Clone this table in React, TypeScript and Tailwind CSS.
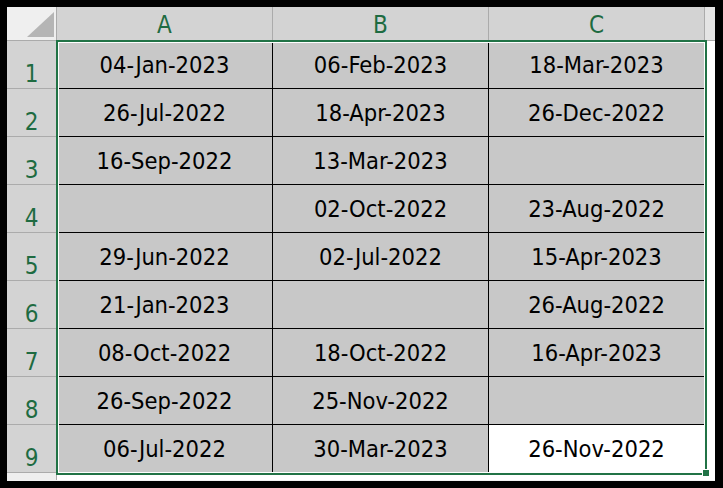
import React from "react";

const rows: string[][] = [
  ["04-Jan-2023", "06-Feb-2023", "18-Mar-2023"],
  ["26-Jul-2022", "18-Apr-2023", "26-Dec-2022"],
  ["16-Sep-2022", "13-Mar-2023", ""],
  ["", "02-Oct-2022", "23-Aug-2022"],
  ["29-Jun-2022", "02-Jul-2022", "15-Apr-2023"],
  ["21-Jan-2023", "", "26-Aug-2022"],
  ["08-Oct-2022", "18-Oct-2022", "16-Apr-2023"],
  ["26-Sep-2022", "25-Nov-2022", ""],
  ["06-Jul-2022", "30-Mar-2023", "26-Nov-2022"],
];

const font = {
  fontFamily: '"Liberation Sans Narrow", "DejaVu Sans Condensed", "Liberation Sans", sans-serif',
};

export default function App() {
  return (
    <div className="w-[723px] h-[488px] bg-black pl-[7px] pt-[7px] pr-[8px] pb-[7px]" style={font}>
      <div className="relative w-[708px] h-[474px] bg-[#f3f3f3] overflow-hidden">
        <div className="grid grid-cols-[50px_216px_216px_216px_10px] grid-rows-[34px_repeat(9,48px)_7px]">
          {/* header row */}
          <div className="relative bg-[#efefef] border-r border-b border-[#ababab]">
            <svg className="absolute left-[20px] top-[5px]" width="28" height="26" viewBox="0 0 28 26">
              <polygon points="0,25 27,25 27,0" fill="#b5b5b5" />
            </svg>
          </div>
          {["A", "B", "C"].map((h) => (
            <div
              key={h}
              className="bg-[#d3d3d3] border-r border-b border-[#ababab] flex items-center justify-center text-[24px] text-[#1e6b41] pt-[2px]"
            >
              {h}
            </div>
          ))}
          <div className="bg-[#e4e4e4] border-b border-[#ababab]" />
          {rows.map((r, i) => (
            <React.Fragment key={i}>
              <div className="bg-[#d3d3d3] border-r border-b border-[#ababab] flex items-center justify-center text-[24px] text-[#1e6b41] pt-[18px]">
                {i + 1}
              </div>
              {r.map((c, j) => {
                const white = i === 8 && j === 2;
                return (
                  <div
                    key={j}
                    className={`${white ? "bg-white" : "bg-[#c8c8c8]"} border-r border-b border-black flex items-center justify-center text-[23.5px] text-black pt-[3px]`}
                  >
                    {c}
                  </div>
                );
              })}
              <div className="bg-white" />
            </React.Fragment>
          ))}
          <div className="bg-[#efefef] border-r border-[#ababab]" />
          <div className="bg-white col-span-4" />
        </div>
        {/* selection overlay */}
        <div className="absolute left-[49px] top-[33px] w-[651px] h-[435px] border-2 border-[#217346] pointer-events-none">
          <div className="w-full h-full border border-white" />
        </div>
        <div className="absolute left-[695px] top-[462px] w-[8px] h-[8px] bg-[#217346] border border-white" />
      </div>
    </div>
  );
}
